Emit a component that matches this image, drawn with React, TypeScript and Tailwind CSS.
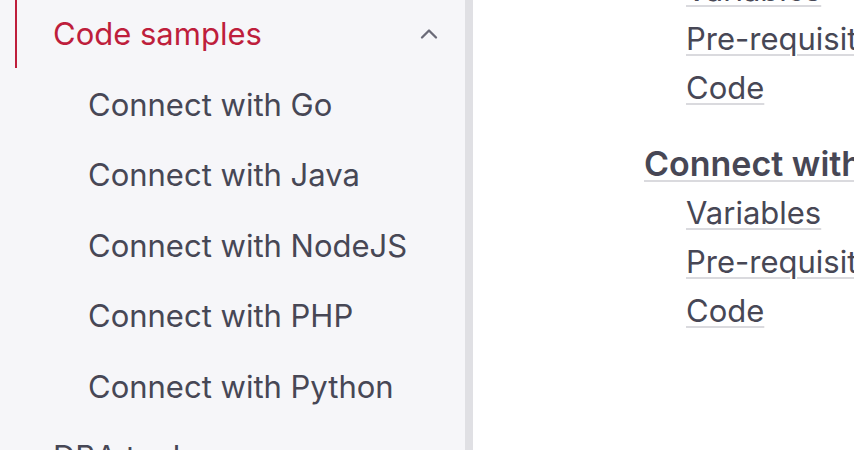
import { ChevronUp } from "lucide-react";

const samples = ["Connect with Go", "Connect with Java", "Connect with NodeJS", "Connect with PHP", "Connect with Python"];

function TocLink({ children }: { children: React.ReactNode }) {
  return (
    <a className="block h-[49px] leading-[49px] pl-[42px] text-[31px] text-[#474755] underline decoration-[#dadade] decoration-2 underline-offset-[4px]">
      {children}
    </a>
  );
}

export default function App() {
  return (
    <div
      className="flex h-[450px] w-[854px] overflow-hidden bg-white"
      style={{ fontFamily: "Inter, 'Noto Sans', sans-serif" }}
    >
      {/* Sidebar */}
      <aside className="w-[465px] shrink-0 bg-[#f6f6f9] pl-[15px]">
        <div className="flex h-[68px] items-center border-l-2 border-[#be1e3c]">
          <span className="ml-[36px] text-[31px] text-[#be1e3c]">Code samples</span>
          <ChevronUp className="ml-auto mr-[22px] h-[28px] w-[28px] text-[#6b6b78]" strokeWidth={2} />
        </div>
        <ul className="mt-[2px]">
          {samples.map((s) => (
            <li key={s} className="flex h-[70.4px] items-center pl-[73px] text-[31px] text-[#474755]">
              {s}
            </li>
          ))}
          <li className="flex h-[70.4px] items-center pl-[38px] text-[31px] text-[#474755]">DBA tools</li>
        </ul>
      </aside>
      <div className="w-[8px] shrink-0 bg-[#e0e0e4]" />

      {/* Main */}
      <main className="flex-1 pl-[171px] -mt-[35px] whitespace-nowrap">
        <TocLink>Variables</TocLink>
        <TocLink>Pre-requisites</TocLink>
        <TocLink>Code</TocLink>
        <a className="mt-[27px] block h-[49px] leading-[49px] text-[34px] font-semibold text-[#474755] underline decoration-[#dadade] decoration-2 underline-offset-[4px]">
          Connect with Java
        </a>
        <TocLink>Variables</TocLink>
        <TocLink>Pre-requisites</TocLink>
        <TocLink>Code</TocLink>
      </main>
    </div>
  );
}
